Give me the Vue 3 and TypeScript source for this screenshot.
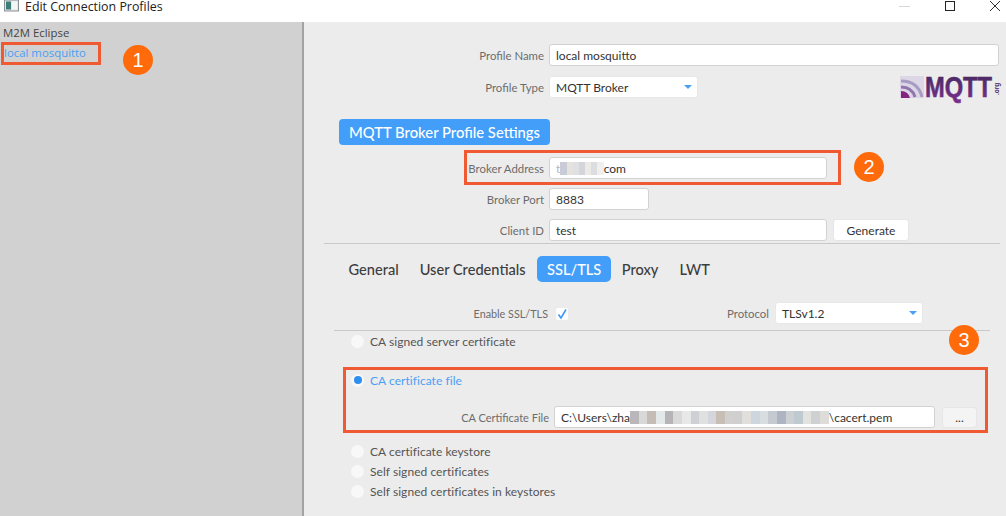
<script setup lang="ts">
const brokerBlur: string[] = ['#c9ccd6', '#e6e2de', '#dfe0e3', '#d3d5da', '#ece9e6', '#dcdde0', '#f0efed']
const certBlur: string[] = [
  '#b9b7b9', '#d8d8d8', '#c6bcb6', '#e3e8e8', '#b6b4b6', '#d9d9d9', '#e8e8e8', '#cfd0d3', '#dfe0e0', '#d5d6dc',
  '#c7beb6', '#d2d0cf', '#cfcfcf', '#e0dfdc', '#cdd6dc', '#d8dde0', '#c5c9d0', '#aeb4c2', '#ccd0d2', '#bfc9d0', '#e2e3df', '#cfd0d2', '#dedcd9',
]
const tabs = [
  { name: 'General', active: false },
  { name: 'User Credentials', active: false },
  { name: 'SSL/TLS', active: true },
  { name: 'Proxy', active: false },
  { name: 'LWT', active: false },
]
</script>

<template>
  <div class="app">
    <header class="titlebar">
      <svg class="app-icon" width="15" height="12" viewBox="0 0 15 12">
        <rect x="0.5" y="0" width="14" height="11" fill="#e4e8ea" stroke="#8b8f94" />
        <rect x="2" y="1.5" width="5" height="8" fill="#3d7f78" />
        <rect x="8" y="1.5" width="5" height="8" fill="#f3f5f6" />
      </svg>
      <span class="title">Edit Connection Profiles</span>
      <div class="controls">
        <svg width="12" height="12" viewBox="0 0 12 12"><path d="M0 6.5H11" stroke="#d6d6d6" /></svg>
        <svg width="12" height="12" viewBox="0 0 12 12"><rect x="1.5" y="1.5" width="9" height="9" fill="none" stroke="#222" /></svg>
        <svg width="12" height="12" viewBox="0 0 12 12"><path d="M1 1L11 11M11 1L1 11" stroke="#333" /></svg>
      </div>
    </header>

    <div class="body">
      <aside class="sidebar">
        <div class="profile">M2M Eclipse</div>
        <div class="profile selected">local mosquitto</div>
      </aside>

      <main class="main">
        <div class="row">
          <label class="lbl">Profile Name</label>
          <div class="field w-name">local mosquitto</div>
        </div>
        <div class="row gap-10 type-row">
          <label class="lbl">Profile Type</label>
          <div class="field select w-type">MQTT Broker<i class="caret"></i></div>
          <svg class="mqtt-logo" width="100" height="25" viewBox="0 0 100 25" role="img" aria-label="MQTT">
            <defs>
              <linearGradient id="mq" x1="0" y1="0" x2="0" y2="1">
                <stop offset="0" stop-color="#3f2a5c" />
                <stop offset="1" stop-color="#7a2f8c" />
              </linearGradient>
            </defs>
            <rect x="0" y="1" width="24" height="22" fill="#dcd6e6" />
            <path d="M1 6Q18 6 22 22" fill="none" stroke="#a79cc2" stroke-width="3" />
            <path d="M1 12Q12 12 15 22" fill="none" stroke="#9076ac" stroke-width="3" />
            <path d="M1 16Q8 16 10 23H1Z" fill="#84247f" />
            <text x="25" y="22" font-family="Liberation Sans, sans-serif" font-weight="700" font-size="30" textLength="67" lengthAdjust="spacingAndGlyphs" fill="url(#mq)" stroke="url(#mq)" stroke-width="0.6">MQTT</text>
            <text x="0" y="0" transform="translate(99 20) rotate(-90)" font-family="Liberation Sans, sans-serif" font-size="6.5" font-weight="700" fill="#4a2a66">.org</text>
          </svg>
        </div>

        <h2 class="heading">MQTT Broker Profile Settings</h2>

        <div class="row gap-12">
          <label class="lbl">Broker Address</label>
          <div class="field w-long">
            <span class="ghost">t</span><span class="blur"><i v-for="(c, n) in brokerBlur" :key="n" :style="{ background: c }"></i></span>com
          </div>
        </div>
        <div class="row gap-8">
          <label class="lbl">Broker Port</label>
          <div class="field w-port">8883</div>
        </div>
        <div class="row gap-8">
          <label class="lbl">Client ID</label>
          <div class="field w-long">test</div>
          <button class="btn generate">Generate</button>
        </div>

        <hr class="rule rule-top" />

        <nav class="tabs">
          <span v-for="t in tabs" :key="t.name" class="tab" :class="{ active: t.active }">{{ t.name }}</span>
        </nav>

        <div class="ssl-row">
          <span class="lbl ssl-lbl">Enable SSL/TLS</span>
          <span class="check">
            <svg width="12" height="12" viewBox="0 0 12 12"><path d="M2.5 6.5L5 10L10 1.5" fill="none" stroke="#3f9bf5" stroke-width="1.6" /></svg>
          </span>
          <span class="lbl proto-lbl">Protocol</span>
          <div class="field select w-proto">TLSv1.2<i class="caret"></i></div>
        </div>

        <hr class="rule rule-mid" />

        <div class="radio"><i class="dot"></i>CA signed server certificate</div>
        <div class="radio picked"><i class="dot on"></i>CA certificate file</div>
        <div class="cert-row">
          <label class="lbl cert-lbl">CA Certificate File</label>
          <div class="field w-cert">
            C:\Users\zha<span class="blur cert"><i v-for="(c, n) in certBlur" :key="n" :style="{ background: c }"></i></span>\cacert.pem
          </div>
          <button class="btn more">...</button>
        </div>
        <div class="radio r-a"><i class="dot"></i>CA certificate keystore</div>
        <div class="radio"><i class="dot"></i>Self signed certificates</div>
        <div class="radio"><i class="dot"></i>Self signed certificates in keystores</div>
      </main>
    </div>

    <div class="mark m1"></div>
    <div class="mark m2"></div>
    <div class="mark m3"></div>
    <span class="badge b1">1</span>
    <span class="badge b2">2</span>
    <span class="badge b3">3</span>
  </div>
</template>

<style>
html,
body {
  margin: 0;
  background: #ececec;
}
</style>

<style scoped>
.app {
  position: relative;
  width: 1006px;
  height: 516px;
  overflow: hidden;
  display: flex;
  flex-direction: column;
  font-family: Lato, "Liberation Sans", sans-serif;
  font-size: 12px;
  color: #333;
  background: #ececec;
}
.titlebar {
  height: 22px;
  flex: none;
  background: #fff;
  display: flex;
  align-items: flex-start;
}
.app-icon {
  margin-left: 4px;
}
.title {
  margin-left: 6px;
  font-family: "Open Sans", sans-serif;
  font-size: 12.4px;
  line-height: 14px;
  color: #222;
}
.controls {
  margin-left: auto;
  display: flex;
  gap: 33px;
  padding: 0 5px 0 0;
}
.body {
  flex: 1;
  display: flex;
  min-height: 0;
}
.sidebar {
  width: 304px;
  flex: none;
  box-sizing: border-box;
  background: #d1d1d1;
  border-right: 2px solid #a3a3a3;
  padding: 3px 0 0 3px;
}
.profile {
  height: 20px;
  line-height: 16px;
  font-family: "Open Sans", sans-serif;
  font-size: 11.4px;
  color: #444;
}
.selected {
  color: #4a9ff5;
  margin-left: 1px;
}
.main {
  flex: 1;
  min-width: 0;
  padding-top: 22px;
  box-sizing: border-box;
}
.row {
  display: flex;
  align-items: center;
  height: 22px;
}
.gap-8 {
  margin-top: 9px;
}
.gap-10 {
  margin-top: 10px;
}
.gap-12 {
  margin-top: 12px;
}
.lbl {
  color: #6c6c6c;
  font-size: 11.4px;
  white-space: nowrap;
}
.row > .lbl {
  width: 240px;
  flex: none;
  margin-right: 5px;
  text-align: right;
}
.field {
  box-sizing: border-box;
  height: 22px;
  line-height: 21px;
  padding-left: 6px;
  background: #fff;
  border: 1px solid #d2d2d2;
  border-radius: 3px;
  font-size: 12px;
  color: #333;
  white-space: nowrap;
  display: flex;
  align-items: center;
}
.w-name {
  width: 450px;
}
.w-type {
  width: 149px;
}
.w-long {
  width: 278px;
}
.w-port {
  width: 100px;
}
.w-proto {
  width: 148px;
}
.w-cert {
  width: 381px;
  flex: none;
}
.select {
  position: relative;
  border-color: #e8e8e8;
}
.caret {
  position: absolute;
  right: 5px;
  top: 8px;
  border-left: 4px solid transparent;
  border-right: 4px solid transparent;
  border-top: 4px solid #4a9ff5;
}
.mqtt-logo {
  margin-left: auto;
  margin-right: 6px;
  margin-top: 1px;
  overflow: visible;
}
.heading {
  margin: 21px 0 0 35px;
  width: 211px;
  height: 26px;
  line-height: 26px;
  text-align: center;
  background: #429ef8;
  color: #fff;
  border-radius: 4px;
  font-size: 14.8px;
  font-weight: 500;
}
.ghost {
  color: #b8b8b8;
}
.blur {
  display: inline-flex;
  height: 13px;
}
.blur i {
  width: 6.2px;
  height: 13px;
  display: block;
}
.blur.cert i {
  width: 8.65px;
}
.btn {
  font: inherit;
  background: #fff;
  border: 1px solid #e6e6e6;
  border-radius: 3px;
  color: #333;
  padding: 0;
}
.generate {
  width: 76px;
  height: 22px;
  margin-left: 6px;
}
.more {
  width: 35px;
  height: 21px;
  margin-left: 7px;
  background: #f4f4f4;
}
.rule {
  border: 0;
  height: 1px;
  margin: 0;
  background: #c9c9c9;
}
.rule-top {
  margin: 2px 6px 0 20px;
}
.tabs {
  display: flex;
  margin: 12px 0 0 34px;
  height: 26px;
  align-items: center;
}
.tab {
  padding: 0 10.5px;
  height: 26px;
  line-height: 27px;
  font-size: 14.6px;
  font-weight: 500;
  color: #3d3d3d;
  border-radius: 5px;
  white-space: nowrap;
}
.tab.active {
  background: #429ef8;
  color: #fff;
  padding: 0 10px;
  margin-left: 1px;
}
.ssl-row {
  display: flex;
  align-items: center;
  height: 22px;
  margin-top: 20px;
  padding-left: 169px;
}
.ssl-lbl {
  width: 75px;
  text-align: right;
  margin-right: 8px;
  font-size: 10.8px;
}
.check {
  width: 12px;
  height: 12px;
  background: #fff;
  border-radius: 2px;
  margin-top: 2px;
  display: block;
  line-height: 0;
}
.proto-lbl {
  margin-left: 159px;
  margin-right: 6px;
}
.rule-mid {
  margin: 6px 16px 0 30px;
}
.radio {
  display: flex;
  align-items: center;
  height: 20px;
  padding-left: 47px;
  color: #555;
  font-size: 12px;
  letter-spacing: 0.05px;
}
.dot {
  width: 13px;
  height: 13px;
  border-radius: 50%;
  background: #f8f8f8;
  margin-right: 6px;
  position: relative;
  flex: none;
}
.dot.on::after {
  content: "";
  position: absolute;
  left: 2.5px;
  top: 2.5px;
  width: 8px;
  height: 8px;
  border-radius: 50%;
  background: #2f8ff0;
}
.picked {
  margin-top: 19px;
  color: #4a9ff5;
}
.cert-row {
  display: flex;
  align-items: center;
  margin-top: 16px;
  height: 22px;
}
.cert-lbl {
  width: 245px;
  margin-right: 5px;
  flex: none;
  text-align: right;
  font-size: 11px;
}
.r-a {
  margin-top: 13px;
}
.mark {
  position: absolute;
  box-sizing: border-box;
  border: 3px solid #f05a33;
}
.m1 {
  left: 1px;
  top: 42px;
  width: 100px;
  height: 23px;
}
.m2 {
  left: 464px;
  top: 150px;
  width: 377px;
  height: 35px;
}
.m3 {
  left: 343px;
  top: 367px;
  width: 645px;
  height: 66px;
}
.badge {
  position: absolute;
  width: 30px;
  height: 30px;
  border-radius: 50%;
  background: #ff6a0a;
  color: #fff;
  font-family: "Liberation Sans", sans-serif;
  font-size: 20px;
  line-height: 30px;
  text-align: center;
}
.b1 {
  left: 123px;
  top: 45px;
}
.b2 {
  left: 854px;
  top: 152px;
}
.b3 {
  left: 949px;
  top: 325px;
}
</style>
